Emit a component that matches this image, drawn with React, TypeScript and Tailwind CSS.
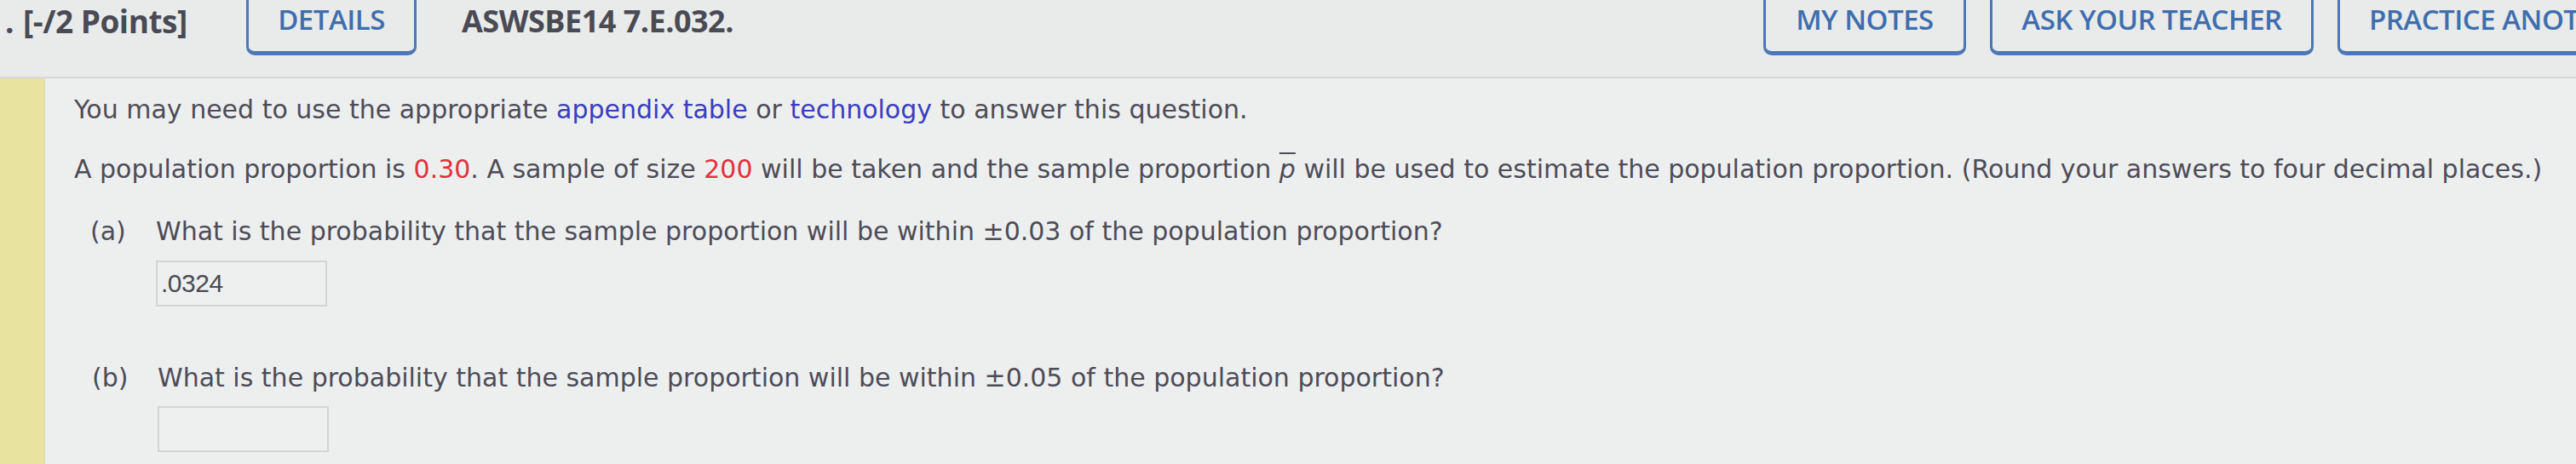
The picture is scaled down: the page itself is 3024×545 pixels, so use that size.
const HeaderButton = ({ label, width }: { label: string; width: string }) => (
  <div
    className={`${width} -mt-[12px] h-[77px] shrink-0 rounded-b-[10px] border-x-[3px] border-b-[5px] border-[#4c78b4] flex justify-center pt-[12px]`}
  >
    <span className="font-['Open_Sans'] font-semibold text-[33px] leading-[46px] text-[#3e6eae] tracking-[-0.5px] whitespace-nowrap">
      {label}
    </span>
  </div>
);

const AnswerBox = ({ value }: { value?: string }) => (
  <div className="w-[201px] h-[54px] border-2 border-[#d3d4d3] bg-[#eef0ef] flex items-center pl-[4px]">
    <span className="font-['Liberation_Sans'] text-[30px] tracking-[-0.5px] text-[#4a4a52]">{value}</span>
  </div>
);

export default function App() {
  return (
    <div className="w-[3024px] h-[545px] overflow-hidden bg-[#e9ebea] text-[#4b4a55]">
      {/* top bar */}
      <div className="h-[92px] flex items-start border-b-2 border-[#d6d8d7] overflow-hidden font-['Open_Sans'] font-bold text-[#4a4a55]">
        <span className="w-[27px] pl-[6px] text-[37px] leading-[50px]">.</span>
        <span className="w-[262px] shrink-0 text-[37px] leading-[50px] tracking-[-0.5px] whitespace-nowrap">
          [-/2 Points]
        </span>
        <HeaderButton label="DETAILS" width="w-[200px]" />
        <span className="ml-[53px] text-[36px] leading-[50px] tracking-[-0.5px] whitespace-nowrap">
          ASWSBE14 7.E.032.
        </span>
        <div className="ml-auto flex gap-[28px] -mr-[120px] font-normal">
          <HeaderButton label="MY NOTES" width="w-[238px]" />
          <HeaderButton label="ASK YOUR TEACHER" width="w-[380px]" />
          <div className="w-[400px] -mt-[12px] h-[77px] shrink-0 rounded-bl-[10px] border-l-[3px] border-b-[5px] border-[#4c78b4] flex pl-[34px] pt-[12px]">
            <span className="font-['Open_Sans'] font-semibold text-[33px] leading-[46px] text-[#3e6eae] tracking-[-0.5px] whitespace-nowrap">
              PRACTICE ANOTHER
            </span>
          </div>
        </div>
      </div>

      {/* question body */}
      <div className="flex h-[453px]">
        <div className="w-[53px] shrink-0 bg-[#e8e4a0] border-r border-[#d9d9c8]" />
        <div className="flex-1 bg-[#edefee] pl-[34px] font-['DejaVu_Sans'] text-[30px] leading-[34px] text-[#4d4c57]">
          <p className="mt-[20px] whitespace-nowrap">
            You may need to use the appropriate <span className="text-[#3a3dc2]">appendix table</span> or{" "}
            <span className="text-[#3a3dc2]">technology</span> to answer this question.
          </p>
          <p className="mt-[36px] whitespace-nowrap">
            A population proportion is <span className="text-[#e2323f]">0.30</span>. A sample of size{" "}
            <span className="text-[#e2323f]">200</span> will be taken and the sample proportion{" "}
            <span className="italic overline decoration-2">p</span> will be used to estimate the population
            proportion. (Round your answers to four decimal places.)
          </p>

          <div className="ml-[19px] mt-[39px] flex">
            <span className="w-[77px] shrink-0">(a)</span>
            <div className="flex flex-col">
              <span className="whitespace-nowrap">
                What is the probability that the sample proportion will be within ±0.03 of the population proportion?
              </span>
              <div className="mt-[17px]">
                <AnswerBox value=".0324" />
              </div>
            </div>
          </div>

          <div className="ml-[21px] mt-[67px] flex">
            <span className="w-[77px] shrink-0">(b)</span>
            <div className="flex flex-col">
              <span className="whitespace-nowrap">
                What is the probability that the sample proportion will be within ±0.05 of the population proportion?
              </span>
              <div className="mt-[16px]">
                <AnswerBox />
              </div>
            </div>
          </div>
        </div>
      </div>
    </div>
  );
}
